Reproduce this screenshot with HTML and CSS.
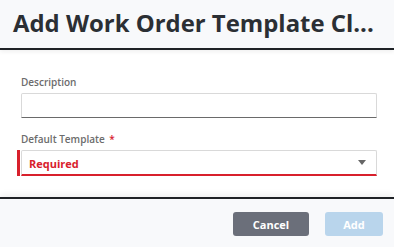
FILE: index.html
```html
<!DOCTYPE html>
<html lang="en">
<head>
    <meta charset="UTF-8">
    <meta name="viewport" content="width=device-width, initial-scale=1.0">
    <title>Add Work Order Template Checklist</title>
    <link rel="stylesheet" href="styles.css">
</head>
<body>
    <div class="dialog">
        <header class="dialog-header">
            <h1 title="Add Work Order Template Checklist">Add Work Order Template Cl...</h1>
        </header>

        <main class="dialog-body">
            <div class="field">
                <label class="field-label" for="description">Description</label>
                <input class="text-input" id="description" type="text">
            </div>

            <div class="field field-error">
                <label class="field-label">Default Template <span class="required-mark">*</span></label>
                <div class="select">
                    <span class="select-value">Required</span>
                    <span class="select-caret"></span>
                </div>
            </div>
        </main>

        <footer class="dialog-footer">
            <button class="btn btn-cancel">Cancel</button>
            <button class="btn btn-add" disabled>Add</button>
        </footer>
    </div>
</body>
</html>
```

FILE: styles.css
```css
:root {
    --header-bg: #f8f9fb;
    --title: #2b2f34;
    --label: #6c6c6c;
    --border: #d9d9d9;
    --error: #d8202c;
    --cancel: #6b6f7a;
    --add: #b9d5ec;
}

* {
    box-sizing: border-box;
}

body {
    margin: 0;
    font-family: 'Open Sans', 'Liberation Sans', sans-serif;
    background: #ffffff;
}

.dialog {
    width: 394px;
    height: 247px;
    display: flex;
    flex-direction: column;
    overflow: hidden;
}

.dialog-header {
    height: 50px;
    padding: 7px 10px 0 13px;
    background: var(--header-bg);
    border-bottom: 2px solid #1f2226;
    box-shadow: 0 2px 4px rgba(0, 0, 0, 0.06);
    position: relative;
    z-index: 1;
}

.dialog-header h1 {
    margin: 0;
    font-size: 23.9px;
    line-height: 32px;
    font-weight: 700;
    color: var(--title);
    white-space: nowrap;
}

.dialog-body {
    flex: 1;
    padding: 25px 17px 0 21px;
    display: flex;
    flex-direction: column;
    gap: 14px;
}

.field {
    display: flex;
    flex-direction: column;
    gap: 4px;
}

.field-label {
    font-size: 10px;
    line-height: 14px;
    font-weight: 600;
    color: var(--label);
}

.required-mark {
    color: var(--error);
    margin-left: 2px;
}

.text-input {
    height: 25px;
    width: 100%;
    border: 1px solid var(--border);
    border-bottom-color: #6a6a6a;
    border-radius: 2px 2px 0 0;
    background: #fff;
    outline: none;
}

.field-error .select {
    position: relative;
}

.field-error .select::before {
    content: '';
    position: absolute;
    left: -5px;
    top: -1px;
    bottom: -2px;
    width: 3px;
    background: var(--error);
}

.select {
    height: 26px;
    display: flex;
    align-items: center;
    justify-content: space-between;
    padding: 0 10px 0 7px;
    border: 1px solid var(--border);
    border-bottom: 2px solid var(--error);
    border-radius: 2px 2px 0 0;
}

.select-value {
    font-size: 11px;
    font-weight: 700;
    color: var(--error);
    padding-top: 1px;
}

.select-caret {
    width: 0;
    height: 0;
    border-left: 4px solid transparent;
    border-right: 4px solid transparent;
    border-top: 5px solid #666;
}

.dialog-footer {
    height: 50px;
    padding: 13px 11px 0 0;
    display: flex;
    justify-content: flex-end;
    align-items: flex-start;
    gap: 16px;
    background: var(--header-bg);
    border-top: 2px solid #1f2226;
    box-shadow: 0 -3px 6px rgba(0, 0, 0, 0.06);
}

.btn {
    height: 24px;
    border: none;
    border-radius: 3px;
    font-family: inherit;
    font-size: 11px;
    font-weight: 700;
    color: #fff;
    padding: 0;
}

.btn-cancel {
    width: 76px;
    background: var(--cancel);
}

.btn-add {
    width: 58px;
    background: var(--add);
}
```
